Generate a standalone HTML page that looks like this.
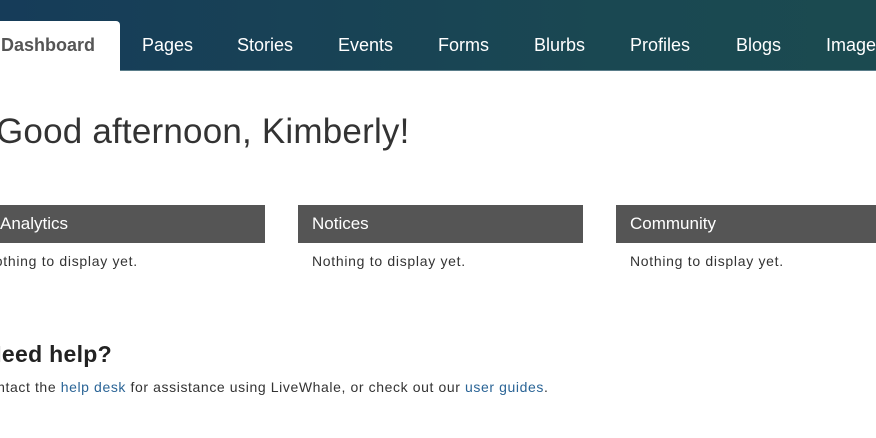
<!DOCTYPE html>
<html><head><style>
body{margin:0;width:876px;height:438px;overflow:hidden;background:#fff;font-family:"Liberation Sans",sans-serif;position:relative}
.hdr{position:absolute;left:0;top:0;width:876px;height:70px;background:linear-gradient(90deg,#163c59,#1a4852 70%,#1b4a50)}
.hdr .line{position:absolute;left:0;top:70px;width:876px;height:1px;background:#5a7d8a}
.tab{position:absolute;left:-10px;top:21px;width:130px;height:50px;background:#fff;border-top-right-radius:4px}
.nav{position:absolute;top:35px;font-size:18px;color:#fff;white-space:nowrap}
.nav.act{color:#555;font-weight:bold}
h1{position:absolute;left:-4px;top:112px;margin:0;font-size:35px;letter-spacing:0.2px;font-weight:normal;color:#333;white-space:nowrap}
.box{position:absolute;top:205px;height:38px;background:#555;color:#fff;font-size:17px;line-height:38px;padding-left:14px;box-sizing:border-box}
.nd{position:absolute;top:253px;font-size:14px;letter-spacing:0.7px;color:#333;white-space:nowrap}
h2{position:absolute;left:-15px;top:341px;margin:0;font-size:23px;letter-spacing:0.3px;font-weight:bold;color:#222;white-space:nowrap}
.ct{position:absolute;left:-22px;top:379px;font-size:14px;letter-spacing:0.6px;color:#333;white-space:nowrap}
a{color:#2a6496;text-decoration:none}
</style></head><body>
<div class="hdr"><div class="line"></div></div>
<div class="tab"></div>
<div class="nav act" style="left:1px">Dashboard</div>
<div class="nav" style="left:142px">Pages</div>
<div class="nav" style="left:237px">Stories</div>
<div class="nav" style="left:338px">Events</div>
<div class="nav" style="left:438px">Forms</div>
<div class="nav" style="left:534px">Blurbs</div>
<div class="nav" style="left:630px">Profiles</div>
<div class="nav" style="left:736px">Blogs</div>
<div class="nav" style="left:826px">Images</div>
<h1>Good afternoon, Kimberly!</h1>
<div class="box" style="left:-14px;width:279px">Analytics</div>
<div class="box" style="left:298px;width:285px">Notices</div>
<div class="box" style="left:616px;width:270px">Community</div>
<div class="nd" style="left:-16px">Nothing to display yet.</div>
<div class="nd" style="left:312px">Nothing to display yet.</div>
<div class="nd" style="left:630px">Nothing to display yet.</div>
<h2>Need help?</h2>
<div class="ct">Contact the <a>help desk</a> for assistance using LiveWhale, or check out our <a>user guides</a>.</div>
</body></html>
